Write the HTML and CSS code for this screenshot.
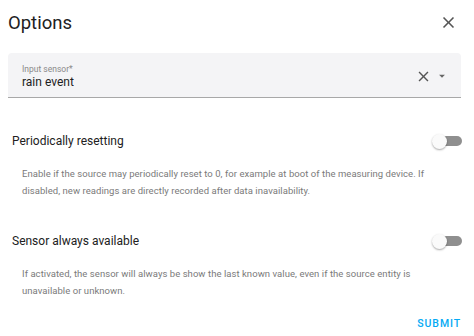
FILE: index.html
```html
<!DOCTYPE html>
<html lang="en">
<head>
    <meta charset="UTF-8">
    <title>Options</title>
    <link rel="stylesheet" href="styles.css">
</head>
<body>
    <div class="dialog">
        <!-- Header -->
        <div class="dialog-header">
            <h2 class="dialog-title">Options</h2>
            <span class="close-btn">
                <svg viewBox="0 0 24 24" width="19" height="19"><path d="M19,6.41L17.59,5L12,10.59L6.41,5L5,6.41L10.59,12L5,17.59L6.41,19L12,13.41L17.59,19L19,17.59L13.41,12L19,6.41Z"/></svg>
            </span>
        </div>

        <!-- Entity picker -->
        <div class="field">
            <div class="field-text">
                <div class="field-label">Input sensor*</div>
                <div class="field-value">rain event</div>
            </div>
            <div class="field-icons">
                <svg class="clear-icon" viewBox="0 0 24 24" width="17" height="17"><path d="M19,6.41L17.59,5L12,10.59L6.41,5L5,6.41L10.59,12L5,17.59L6.41,19L12,13.41L17.59,19L19,17.59L13.41,12L19,6.41Z"/></svg>
                <svg class="arrow-icon" viewBox="0 0 24 24" width="14" height="14"><path d="M7,10L12,15L17,10H7Z"/></svg>
            </div>
        </div>

        <!-- Options -->
        <div class="option first">
            <div class="option-row">
                <span class="option-title">Periodically resetting</span>
                <span class="switch"><span class="switch-track"></span><span class="switch-knob"></span></span>
            </div>
            <p class="option-desc">Enable if the source may periodically reset to 0, for example at boot of the measuring device. If disabled, new readings are directly recorded after data inavailability.</p>
        </div>

        <div class="option">
            <div class="option-row">
                <span class="option-title">Sensor always available</span>
                <span class="switch"><span class="switch-track"></span><span class="switch-knob"></span></span>
            </div>
            <p class="option-desc">If activated, the sensor will always be show the last known value, even if the source entity is unavailable or unknown.</p>
        </div>

        <div class="actions">
            <span class="submit-btn">SUBMIT</span>
        </div>
    </div>
</body>
</html>
```

FILE: styles.css
```css
* {
    margin: 0;
    padding: 0;
    box-sizing: border-box;
    font-family: Roboto, 'Noto Sans', sans-serif;
}

body {
    background: #fff;
    width: 474px;
    height: 336px;
    overflow: hidden;
}

.dialog {
    display: flex;
    flex-direction: column;
}

/* Header */
.dialog-header {
    height: 45px;
    display: flex;
    align-items: center;
    justify-content: space-between;
    padding: 0 16px 0 8px;
    margin-bottom: 8px;
}

.dialog-title {
    font-size: 18.5px;
    font-weight: 400;
    color: #212121;
    line-height: 24px;
}

.close-btn {
    display: flex;
    fill: #555;
}

/* Field */
.field {
    margin: 0 13px 0 8px;
    height: 45px;
    background: #f4f4f6;
    border-bottom: 1px solid #a8a8a8;
    border-radius: 4px 4px 0 0;
    display: flex;
    align-items: center;
    padding: 0 12px 0 14px;
}

.field-text {
    flex: 1;
    align-self: flex-start;
    padding-top: 10px;
}

.field-label {
    font-size: 8.5px;
    line-height: 12px;
    color: #8a8a8a;
}

.field-value {
    font-size: 12px;
    line-height: 14px;
    color: #212121;
}

.field-icons {
    display: flex;
    align-items: center;
    gap: 3px;
    margin-top: 2px;
}

.clear-icon {
    fill: #555;
}

.arrow-icon {
    fill: #666;
}

/* Options */
.option {
    margin-top: 32px;
    padding: 0 12px;
}

.option.first {
    margin-top: 33px;
}

.option-row {
    height: 20px;
    display: flex;
    align-items: center;
    justify-content: space-between;
}

.option-title {
    font-size: 12px;
    line-height: 16px;
    color: #212121;
}

.switch {
    position: relative;
    width: 30px;
    height: 20px;
    display: flex;
    align-items: center;
    justify-content: flex-end;
}

.switch-track {
    width: 22px;
    height: 10px;
    border-radius: 5px;
    background: #8f8f8f;
}

.switch-knob {
    position: absolute;
    left: 0;
    top: 3px;
    width: 15px;
    height: 15px;
    border-radius: 50%;
    background: #fafafa;
    box-shadow: 0 1px 2px rgba(0, 0, 0, 0.35);
}

.option-desc {
    margin-top: 14px;
    padding: 0 20px 0 10px;
    font-size: 9.5px;
    line-height: 17px;
    letter-spacing: 0.05px;
    color: #7a7a7a;
}

/* Actions */
.actions {
    display: flex;
    justify-content: flex-end;
    padding: 18px 13px 0 0;
}

.submit-btn {
    font-size: 10.5px;
    font-weight: 500;
    line-height: 14px;
    letter-spacing: 0.9px;
    color: #03a9f4;
}
```
